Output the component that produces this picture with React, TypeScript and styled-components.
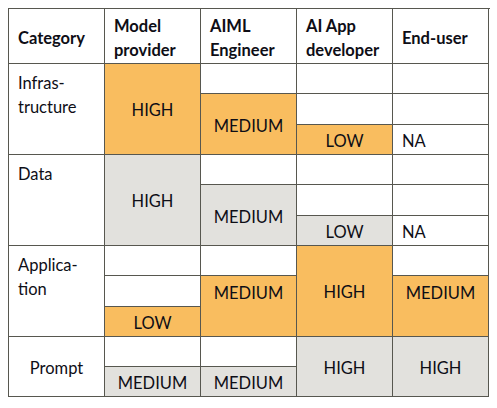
import styled, { createGlobalStyle } from "styled-components";

const GlobalStyle = createGlobalStyle`
  html, body {
    margin: 0;
    background: #ffffff;
  }
  body {
    padding: 8px;
    font-family: Lato, "Open Sans", sans-serif;
    color: #0e0e16;
  }
`;

type Tone = "orange" | "gray" | "white";

const tones: Record<Tone, string> = {
  orange: "#f9bd5f",
  gray: "#e2e1dd",
  white: "#ffffff",
};

// 5 equal columns, header then 11 thin sub-rows
const Grid = styled.div`
  display: grid;
  width: 481px;
  grid-template-columns: repeat(5, 96px);
  grid-template-rows: 55px repeat(9, 30.33px) repeat(2, 30px);
  border-top: 1px solid #57574f;
  border-left: 1px solid #57574f;
`;

const Cell = styled.div<{
  $col: number;
  $row: number;
  $span?: number;
  $tone?: Tone;
  $align?: "left" | "center";
  $top?: number;
  $bold?: boolean;
}>`
  box-sizing: border-box;
  grid-column: ${(p) => p.$col};
  grid-row: ${(p) => p.$row} / span ${(p) => p.$span ?? 1};
  display: flex;
  flex-direction: column;
  justify-content: ${(p) => (p.$top !== undefined ? "flex-start" : "center")};
  align-items: ${(p) => (p.$align === "left" ? "flex-start" : "center")};
  padding: ${(p) => (p.$top !== undefined ? `${p.$top}px 9px 0` : "3px 9px 0")};
  background: ${(p) => tones[p.$tone ?? "white"]};
  border-right: 1px solid #57574f;
  border-bottom: 1px solid #57574f;
  font-size: 16.5px;
  font-weight: ${(p) => (p.$bold ? 700 : 400)};
  line-height: 24px;
  white-space: nowrap;
`;

type CellData = {
  col: number;
  row: number;
  span?: number;
  tone?: Tone;
  text?: string;
  align?: "left" | "center";
  top?: number;
};

const headers = ["Category", "Model\nprovider", "AIML\nEngineer", "AI App\ndeveloper", "End-user"];

const cells: CellData[] = [
  // Infrastructure
  { col: 1, row: 2, span: 3, text: "Infras-\ntructure", align: "left", top: 7 },
  { col: 2, row: 2, span: 3, tone: "orange", text: "HIGH" },
  { col: 3, row: 2 },
  { col: 3, row: 3, span: 2, tone: "orange", text: "MEDIUM" },
  { col: 4, row: 2 },
  { col: 4, row: 3 },
  { col: 4, row: 4, tone: "orange", text: "LOW" },
  { col: 5, row: 2 },
  { col: 5, row: 3 },
  { col: 5, row: 4, text: "NA", align: "left" },
  // Data
  { col: 1, row: 5, span: 3, text: "Data", align: "left", top: 7 },
  { col: 2, row: 5, span: 3, tone: "gray", text: "HIGH" },
  { col: 3, row: 5 },
  { col: 3, row: 6, span: 2, tone: "gray", text: "MEDIUM" },
  { col: 4, row: 5 },
  { col: 4, row: 6 },
  { col: 4, row: 7, tone: "gray", text: "LOW" },
  { col: 5, row: 5 },
  { col: 5, row: 6 },
  { col: 5, row: 7, text: "NA", align: "left" },
  // Application
  { col: 1, row: 8, span: 3, text: "Applica-\ntion", align: "left", top: 7 },
  { col: 2, row: 8 },
  { col: 2, row: 9 },
  { col: 2, row: 10, tone: "orange", text: "LOW" },
  { col: 3, row: 8 },
  { col: 3, row: 9, span: 2, tone: "orange", text: "MEDIUM", top: 5 },
  { col: 4, row: 8, span: 3, tone: "orange", text: "HIGH" },
  { col: 5, row: 8 },
  { col: 5, row: 9, span: 2, tone: "orange", text: "MEDIUM", top: 5 },
  // Prompt
  { col: 1, row: 11, span: 2, text: "Prompt" },
  { col: 2, row: 11 },
  { col: 2, row: 12, tone: "gray", text: "MEDIUM" },
  { col: 3, row: 11 },
  { col: 3, row: 12, tone: "gray", text: "MEDIUM" },
  { col: 4, row: 11, span: 2, tone: "gray", text: "HIGH" },
  { col: 5, row: 11, span: 2, tone: "gray", text: "HIGH" },
];

const lines = (text?: string) =>
  text ? text.split("\n").map((l, i) => <span key={i}>{l}</span>) : null;

export default function App() {
  return (
    <>
      <GlobalStyle />
      <Grid>
        {headers.map((h, i) => (
          <Cell key={h} $col={i + 1} $row={1} $align="left" $bold>
            {lines(h)}
          </Cell>
        ))}
        {cells.map((c) => (
          <Cell
            key={`${c.col}-${c.row}`}
            $col={c.col}
            $row={c.row}
            $span={c.span}
            $tone={c.tone}
            $align={c.align}
            $top={c.top}
          >
            {lines(c.text)}
          </Cell>
        ))}
      </Grid>
    </>
  );
}
